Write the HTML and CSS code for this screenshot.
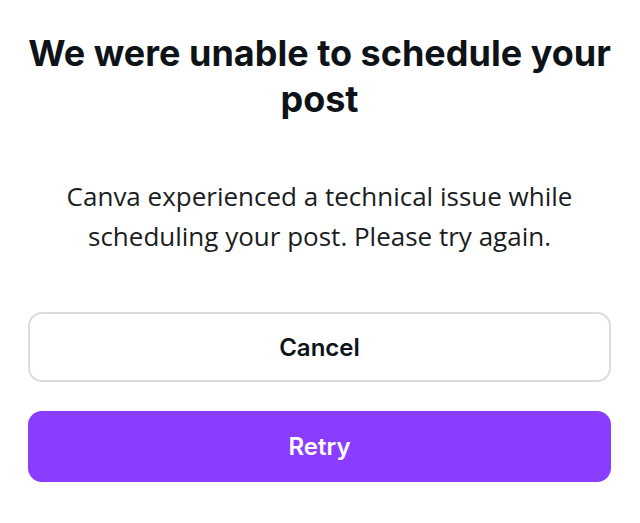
FILE: index.html
```html
<!DOCTYPE html>
<html>
<head>
<meta charset="utf-8">
<link rel="stylesheet" href="styles.css">
</head>
<body>
<div class="dialog">
  <h1 class="title">We were unable to schedule your post</h1>
  <p class="message">Canva experienced a technical issue while scheduling your post. Please try again.</p>
  <div class="actions">
    <button class="btn btn-secondary">Cancel</button>
    <button class="btn btn-primary">Retry</button>
  </div>
</div>
</body>
</html>
```
FILE: styles.css
```css
html, body {
  margin: 0;
  padding: 0;
  background: #ffffff;
}
.dialog {
  width: 640px;
  height: 523px;
  box-sizing: border-box;
  padding: 30px 29px 0 28px;
  display: flex;
  flex-direction: column;
  align-items: stretch;
}
.title {
  margin: 0;
  font-family: Inter, "Liberation Sans", sans-serif;
  font-weight: 700;
  font-size: 36px;
  line-height: 46px;
  letter-spacing: 0;
  text-align: center;
  color: #0e1318;
}
.message {
  margin: 54px 0 0 0;
  font-family: "Open Sans", "Liberation Sans", sans-serif;
  font-size: 26px;
  line-height: 40px;
  text-align: center;
  color: #1a1d21;
}
.actions {
  margin-top: 56px;
  display: flex;
  flex-direction: column;
  gap: 29px;
}
.btn {
  height: 70px;
  border-radius: 14px;
  font-family: Inter, "Liberation Sans", sans-serif;
  font-weight: 600;
  font-size: 24px;
  cursor: pointer;
}
.btn-secondary {
  background: #ffffff;
  border: 2px solid #dcdcde;
  color: #0e1318;
}
.btn-primary {
  background: #8b3dff;
  border: none;
  color: #ffffff;
  height: 71px;
}
```
